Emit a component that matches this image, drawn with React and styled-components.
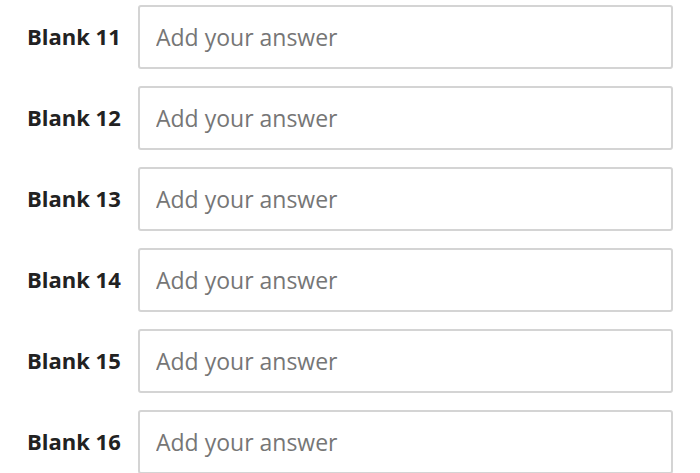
import React from 'react'
import styled, { createGlobalStyle } from 'styled-components'

const Global = createGlobalStyle`
  body {
    margin: 0;
    background: #fff;
    font-family: "Open Sans", "Liberation Sans", sans-serif;
    overflow: hidden;
  }
`

const List = styled.div`
  display: flex;
  flex-direction: column;
  gap: 17px;
  padding: 5px 27px 0 27px;
`

const Row = styled.div`
  display: flex;
  align-items: center;
`

const Label = styled.label`
  width: 111px;
  flex: none;
  font-size: 22px;
  font-weight: 700;
  color: #222;
  margin-top: -2px;
`

const Input = styled.input`
  box-sizing: border-box;
  width: 536px;
  height: 64px;
  border: 2px solid #d4d4d4;
  border-radius: 3px;
  padding: 0 16px;
  font-family: "Open Sans", "Liberation Sans", sans-serif;
  font-size: 23px;
  color: #333;
  outline: none;
  &::placeholder {
    color: #767676;
  }
`

const blanks = [11, 12, 13, 14, 15, 16]

function App() {
  return (
    <>
      <Global />
      <List>
        {blanks.map(n => (
          <Row key={n}>
            <Label>Blank {n}</Label>
            <Input placeholder="Add your answer" />
          </Row>
        ))}
      </List>
    </>
  )
}

export default App
